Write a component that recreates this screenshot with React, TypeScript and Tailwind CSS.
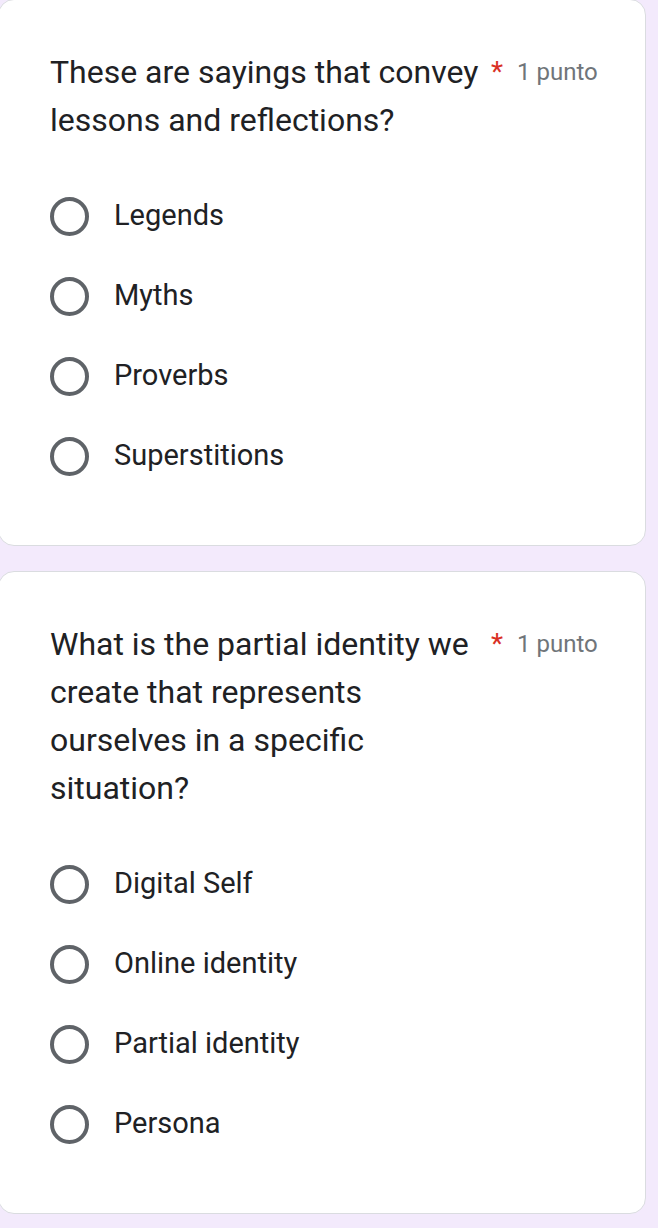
const questions = [
  {
    title: "These are sayings that convey lessons and reflections?",
    options: ["Legends", "Myths", "Proverbs", "Superstitions"],
  },
  {
    title: "What is the partial identity we create that represents ourselves in a specific situation?",
    options: ["Digital Self", "Online identity", "Partial identity", "Persona"],
  },
];

function Radio() {
  return (
    <span className="block h-[39px] w-[39px] shrink-0 rounded-full border-[4px] border-[#5f6368]" />
  );
}

function QuestionCard({ title, options }: { title: string; options: string[] }) {
  return (
    <div className="ml-[-2px] w-[648px] rounded-[16px] border border-[#dadce0] bg-white pb-[49px] pl-[51px] pt-[48px]">
      <div className="flex items-start">
        <div className="w-[438px] text-[32px] leading-[48px] text-[#202124]">{title}</div>
        <span className="ml-[3px] text-[28px] leading-[48px] text-[#d93025]">*</span>
        <span className="ml-[14px] text-[24px] leading-[48px] text-[#70757a]">1 punto</span>
      </div>
      <div className="mt-[32px] flex flex-col">
        {options.map((o) => (
          <label key={o} className="flex h-20 items-center gap-[25px]">
            <Radio />
            <span className="text-[29px] text-[#202124]">{o}</span>
          </label>
        ))}
      </div>
    </div>
  );
}

export default function App() {
  return (
    <div
      className="min-h-[1228px] w-[658px] overflow-hidden bg-[#f3eafc]"
      style={{ fontFamily: "Roboto, 'Liberation Sans', sans-serif" }}
    >
      <div className="-mt-px flex flex-col gap-[25px]">
        {questions.map((q) => (
          <QuestionCard key={q.title} title={q.title} options={q.options} />
        ))}
      </div>
    </div>
  );
}
